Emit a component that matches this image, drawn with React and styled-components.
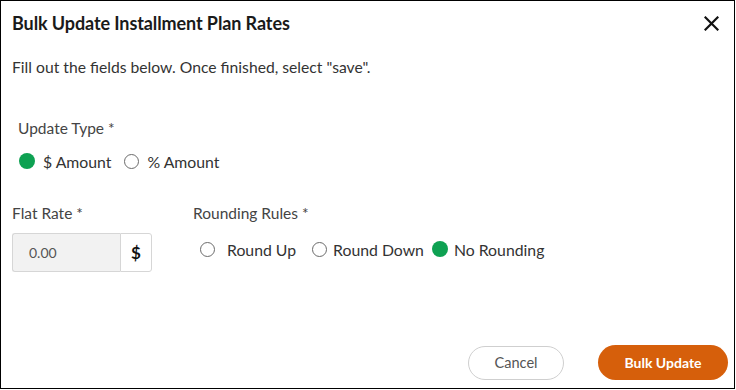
import React from "react";
import styled, { createGlobalStyle } from "styled-components";

const Global = createGlobalStyle`
  html, body { margin: 0; padding: 0; background: #fff; }
  body { font-family: Lato, "Open Sans", Arial, sans-serif; }
  * { box-sizing: border-box; }
`;

const Dialog = styled.div`
  width: 735px;
  height: 389px;
  border: 1px solid #000;
  background: #fff;
  display: flex;
  flex-direction: column;
  color: #333;
`;

const Header = styled.div`
  display: flex;
  align-items: center;
  justify-content: space-between;
  padding: 0 13px 0 11px;
  height: 44px;
`;

const Title = styled.h1`
  margin: 0;
  font-size: 18px;
  font-weight: 700;
  color: #1a1a1a;
  letter-spacing: -0.1px;
`;

const Close = styled.button`
  border: none;
  background: none;
  padding: 0;
  width: 20px;
  height: 20px;
  display: flex;
  align-items: center;
  justify-content: center;
  cursor: pointer;
`;

const Body = styled.div`
  flex: 1;
  padding: 12px 11px 0 11px;
  display: flex;
  flex-direction: column;
`;

const Intro = styled.p`
  margin: 0;
  font-size: 15.7px;
  color: #333;
  line-height: 20px;
`;

const Section = styled.div`
  padding-left: ${(p) => p.$indent || 0}px;
  margin-top: ${(p) => p.$top || 0}px;
  display: flex;
  flex-direction: column;
`;

const Label = styled.div`
  font-size: 15.5px;
  color: #444;
  line-height: 20px;
`;

const RadioRow = styled.div`
  display: flex;
  align-items: center;
  margin-top: ${(p) => p.$top || 0}px;
  padding-left: ${(p) => p.$indent || 0}px;
  height: 24px;
`;

const RadioItem = styled.label`
  display: flex;
  align-items: center;
  font-size: 15.8px;
  color: #333;
  margin-right: ${(p) => p.$gap || 6}px;
`;

const Dot = styled.span`
  width: ${(p) => (p.$checked ? 16 : 15)}px;
  height: ${(p) => (p.$checked ? 16 : 15)}px;
  border-radius: 50%;
  background: ${(p) => (p.$checked ? "#0ea152" : "#fff")};
  border: ${(p) => (p.$checked ? "none" : "1.5px solid #6b6b6b")};
  margin-right: ${(p) => p.$space || 8}px;
  flex: none;
`;

const FieldsRow = styled.div`
  display: flex;
  margin-top: 30px;
`;

const Field = styled.div`
  display: flex;
  flex-direction: column;
  width: ${(p) => p.$w || "auto"};
`;

const InputGroup = styled.div`
  display: flex;
  margin-top: 10px;
  height: 39px;
  width: 140px;
`;

const Input = styled.div`
  flex: none;
  width: 108px;
  background: #f2f2f2;
  border: 1px solid #d6d6d6;
  border-right: none;
  border-radius: 3px 0 0 3px;
  display: flex;
  align-items: center;
  padding-left: 16px;
  font-size: 14px;
  color: #555;
`;

const Addon = styled.div`
  width: 33px;
  border: 1px solid #d6d6d6;
  border-radius: 0 3px 3px 0;
  display: flex;
  align-items: center;
  justify-content: center;
  font-weight: 700;
  font-size: 17px;
  color: #111;
`;

const Footer = styled.div`
  display: flex;
  justify-content: flex-end;
  align-items: center;
  gap: 34px;
  padding: 0 6px 8px 0;
`;

const Button = styled.button`
  height: ${(p) => (p.$primary ? 35 : 34)}px;
  width: ${(p) => (p.$primary ? 130 : 96)}px;
  border-radius: 18px;
  font-family: inherit;
  font-size: ${(p) => (p.$primary ? 14 : 14.6)}px;
  font-weight: ${(p) => (p.$primary ? 700 : 400)};
  color: ${(p) => (p.$primary ? "#fff" : "#555")};
  background: ${(p) => (p.$primary ? "#d65f0b" : "#fff")};
  border: ${(p) => (p.$primary ? "none" : "1px solid #cfcfcf")};
  cursor: pointer;
`;

function Radio({ checked, children, gap, space }) {
  return (
    <RadioItem $gap={gap}>
      <Dot $checked={checked} $space={space} />
      {children}
    </RadioItem>
  );
}

export default function App() {
  return (
    <>
      <Global />
      <Dialog>
        <Header>
          <Title>Bulk Update Installment Plan Rates</Title>
          <Close aria-label="close">
            <svg width="15" height="15" viewBox="0 0 15 15">
              <path d="M1.5 1.5 L13.5 13.5 M13.5 1.5 L1.5 13.5" stroke="#111" strokeWidth="2.2" strokeLinecap="square" />
            </svg>
          </Close>
        </Header>
        <Body>
          <Intro>Fill out the fields below. Once finished, select "save".</Intro>
          <Section $indent={6} $top={41}>
            <Label>Update Type *</Label>
            <RadioRow $top={11} $indent={1}>
              <Radio checked gap={13}>$ Amount</Radio>
              <Radio>% Amount</Radio>
            </RadioRow>
          </Section>
          <FieldsRow>
            <Field $w="181px">
              <Label>Flat Rate *</Label>
              <InputGroup>
                <Input>0.00</Input>
                <Addon>$</Addon>
              </InputGroup>
            </Field>
            <Field>
              <Label>Rounding Rules *</Label>
              <RadioRow $top={14} $indent={7}>
                <Radio space={12} gap={16}>Round Up</Radio>
                <Radio space={6} gap={8}>Round Down</Radio>
                <Radio checked space={6}>No Rounding</Radio>
              </RadioRow>
            </Field>
          </FieldsRow>
        </Body>
        <Footer>
          <Button>Cancel</Button>
          <Button $primary>Bulk Update</Button>
        </Footer>
      </Dialog>
    </>
  );
}
